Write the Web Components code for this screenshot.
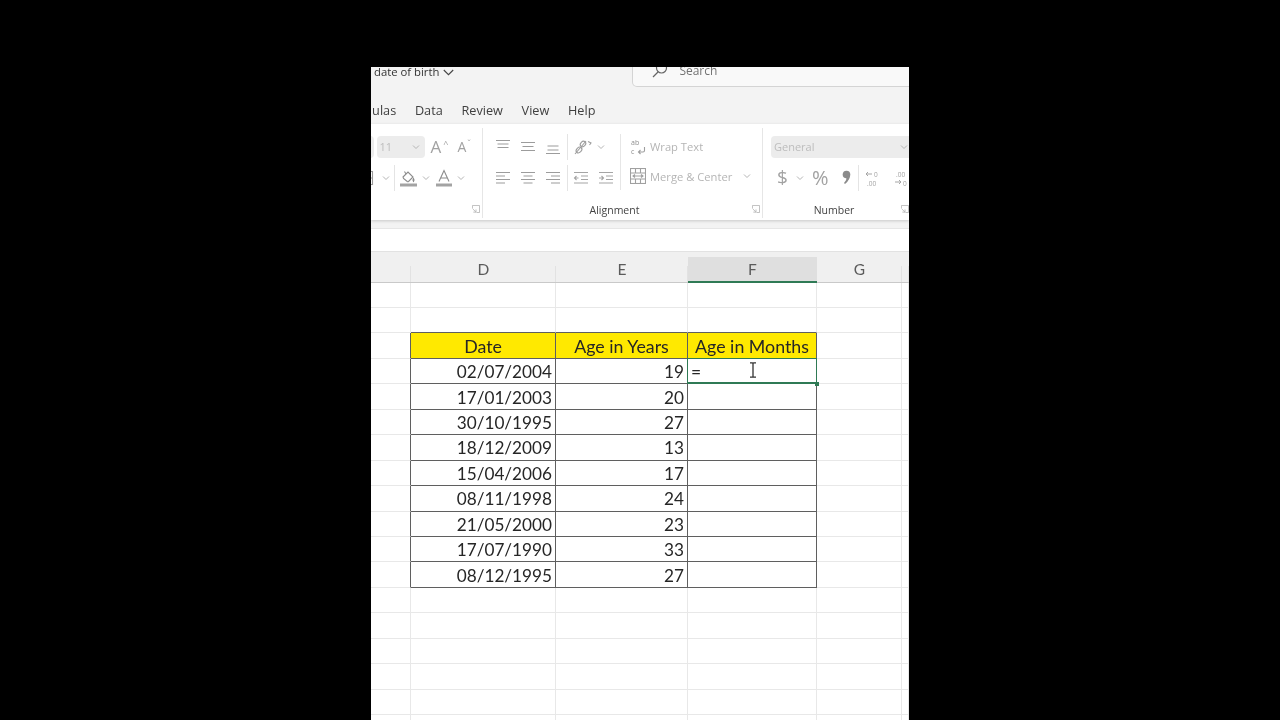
<!DOCTYPE html>
<html>
<head>
<meta charset="utf-8">
<title>Excel age sheet</title>
<style>
  html, body { margin: 0; height: 100%; background: #000; overflow: hidden; }
  body { display: flex; justify-content: center; }
  excel-window { margin-top: 67px; }
</style>
</head>
<body>

<excel-window>
  <title-row slot="top" name="date of birth"></title-row>
  <tab-row slot="top"></tab-row>
  <excel-ribbon slot="top"></excel-ribbon>
  <sheet-grid slot="sheet"></sheet-grid>
</excel-window>

<script>
const CHEV = `<svg width="8" height="6" viewBox="0 0 8 6" fill="none" stroke="#b5b5b5" stroke-width="1"><path d="M1 1.500l3 3 3-3"/></svg>`;

function lines(rows, stroke = '#9c9c9c') {
  const d = rows.map(r => `M${r[0]} ${r[1]}H${r[2]}`).join('');
  return `<svg width="16" height="16" viewBox="0 0 16 16" fill="none" stroke="${stroke}" stroke-width="1.1"><path d="${d}"/></svg>`;
}

const ICONS = {
  alignTop: lines([[1, 1.5, 15], [2.5, 5, 13.5], [2.5, 8.5, 13.5]]),
  alignMid: lines([[1, 3.5, 15], [2.5, 7.5, 13.5], [1, 11.5, 15]]),
  alignBot: lines([[2.5, 7, 13.5], [2.5, 11, 13.5], [1, 14.5, 15]]),
  left: lines([[1, 2.5, 15], [1, 6, 10], [1, 9.5, 15], [1, 13, 10]]),
  center: lines([[1, 2.5, 15], [3.5, 6, 12.5], [1, 9.5, 15], [3.5, 13, 12.5]]),
  right: lines([[1, 2.5, 15], [6, 6, 15], [1, 9.5, 15], [6, 13, 15]]),
  indentDec: `<svg width="16" height="16" viewBox="0 0 16 16" fill="none" stroke="#a5a5a5" stroke-width="1.1"><path d="M1 2.500h14M8 6h7M8 9.500h7M1 13h14M5.500 8H1.500M3.500 6l-2 2 2 2"/></svg>`,
  indentInc: `<svg width="16" height="16" viewBox="0 0 16 16" fill="none" stroke="#a5a5a5" stroke-width="1.1"><path d="M1 2.500h14M8 6h7M8 9.500h7M1 13h14M1 8h4M3.500 6l2 2-2 2"/></svg>`,
  orient: `<svg width="20" height="18" viewBox="0 0 20 18" fill="none" stroke="#9e9e9e" stroke-width="1.1"><ellipse cx="6" cy="12" rx="2.400" ry="3.200" transform="rotate(45 6 12)"/><ellipse cx="10" cy="6" rx="2.400" ry="3" transform="rotate(45 10 6)"/><path d="M2 16L13 3M15 3.500l3 1.500-1.500 2"/></svg>`,
  wrap: `<svg width="16" height="18" viewBox="0 0 16 18" fill="none" stroke="#9e9e9e" stroke-width="1.1"><text x="1" y="7.500" font-family="Open Sans" font-size="7" fill="#8f8f8f" stroke="none">ab</text><text x="1" y="17" font-family="Open Sans" font-size="7" fill="#8f8f8f" stroke="none">c</text><path d="M14.500 10v3.500a1.500 1.500 0 0 1-1.500 1.500H8.500M10.500 13l-2 2 2 2"/></svg>`,
  merge: `<svg width="16" height="16" viewBox="0 0 16 16" fill="none" stroke="#a0a0a0" stroke-width="1.1"><rect x=".5" y=".5" width="15" height="15"/><path d="M.5 5h15M.5 11h15M5.500 .5V5M10.500 .5V5M5.500 11v4.500M10.500 11v4.500M3 8h10M5 6.500L3 8l2 1.500M11 6.500L13 8l-2 1.500"/></svg>`,
  fill: `<svg width="17" height="18" viewBox="0 0 17 18" fill="none" stroke="#8c8c8c" stroke-width="1.1"><path d="M3 8l5-5 5 5-4.500 4.500a1 1 0 0 1-1.200 0L3.500 9.500zM6 5L4.500 2.500"/><path d="M13.500 9.500q1.200 1.800 0 3q-1.200-1.200 0-3z" fill="#8c8c8c"/><rect x="0" y="14.500" width="17" height="3" fill="#a3a3a3" stroke="none"/></svg>`,
  fontColor: `<svg width="16" height="18" viewBox="0 0 16 18" fill="none"><path d="M3 12.500L8 1.500l5 11M4.800 9h6.400" stroke="#8c8c8c" stroke-width="1.100"/><rect x="0" y="14.500" width="16" height="3" fill="#a3a3a3"/></svg>`,
  border: `<svg width="16" height="16" viewBox="0 0 16 16" fill="none" stroke="#9a9a9a" stroke-width="1.1"><rect x=".5" y="1.500" width="14" height="13"/><path d="M.5 8h14M7.500 1.500v13"/></svg>`,
  comma: `<svg width="9" height="15" viewBox="0 0 9 15"><circle cx="4.500" cy="4.500" r="3.800" fill="#8b8b8b"/><path d="M8 4.500q.5 5-5 9.500l-1-1q3-3 2.500-6z" fill="#8b8b8b"/></svg>`,
  launcher: `<svg width="8" height="8" viewBox="0 0 9 9" fill="none" stroke="#b8b8b8" stroke-width="1"><path d="M.5 4V.5H8.500V8.500H5M1 4.500l3.500 3.500M4.500 5v3H1.500"/></svg>`,
  search: `<svg width="16" height="16" viewBox="0 0 16 16" fill="none" stroke="#666" stroke-width="1.2"><circle cx="9.500" cy="6" r="5"/><path d="M6 10L1 15"/></svg>`,
  down: `<svg width="11" height="7" viewBox="0 0 11 7" fill="none" stroke="#444" stroke-width="1.1"><path d="M.8 1l4.700 4.700L10.200 1"/></svg>`
};

class ExcelIcon extends HTMLElement {
  connectedCallback() {
    this.attachShadow({mode: 'open'});
    this.shadowRoot.innerHTML = `<style>:host{display:inline-flex;align-items:center;justify-content:center;flex:none}svg{display:block}</style>${ICONS[this.getAttribute('name')]}`;
  }
}
customElements.define('excel-icon', ExcelIcon);

class ExcelWindow extends HTMLElement {
  constructor() {
    super();
    this.attachShadow({mode: 'open'});
    this.shadowRoot.innerHTML = `
      <style>
        :host { display: flex; flex-direction: column; width: 538px; height: 653px; overflow: hidden; background: #fff; font-family: "Open Sans", "Noto Sans", sans-serif; filter: blur(.35px); }
        ::slotted(*) { flex: none; }
      </style>
      <slot name="top"></slot>
      <slot name="sheet"></slot>`;
  }
}
customElements.define('excel-window', ExcelWindow);

class TitleRow extends HTMLElement {
  connectedCallback() {
    this.attachShadow({mode: 'open'});
    this.shadowRoot.innerHTML = `
      <style>
        :host { display: flex; height: 28px; background: #f3f3f3; color: #333; font-size: 11.300px; box-sizing: border-box; padding-left: 3px; }
        .name { display: flex; align-items: center; gap: 4px; height: 10px; line-height: 10px; }
        .search { margin-left: 178px; flex: 1; height: 20px; margin-top: -1px; margin-right: -4px; background: #f9f9f9; border: 1px solid #d4d4d4; border-top: 0; border-radius: 0 0 5px 5px; display: flex; align-items: flex-start; gap: 11px; padding: 0 0 0 19px; color: #737373; font-size: 12px; line-height: 9px; }
        .search excel-icon { margin-top: -4px; }
      </style>
      <div class="name"><span>${this.getAttribute('name')}</span><excel-icon name="down"></excel-icon></div>
      <div class="search"><excel-icon name="search"></excel-icon><span>Search</span></div>`;
  }
}
customElements.define('title-row', TitleRow);

class TabRow extends HTMLElement {
  connectedCallback() {
    this.attachShadow({mode: 'open'});
    const tabs = ['Formulas', 'Data', 'Review', 'View', 'Help'];
    this.shadowRoot.innerHTML = `
      <style>
        :host { display: flex; align-items: center; gap: 18.700px; height: 29px; background: #f3f3f3; color: #3f3f3f; font-size: 12.700px; box-sizing: border-box; margin-left: -30px; padding-top: 1px; }
      </style>
      ${tabs.map(t => `<span>${t}</span>`).join('')}`;
  }
}
customElements.define('tab-row', TabRow);

class RibbonGroup extends HTMLElement {
  connectedCallback() {
    this.attachShadow({mode: 'open'});
    const label = this.getAttribute('label') || '';
    this.shadowRoot.innerHTML = `
      <style>
        :host { display: grid; grid-template-rows: 62px 1fr; flex: none; box-sizing: border-box; width: var(--w); border-right: 1px solid #e6e6e6; position: relative; margin: 4px 0 2px; padding-top: 3px; }
        .body { display: flex; flex-direction: column; gap: 0; overflow: hidden; }
        .foot { display: flex; align-items: center; justify-content: center; position: relative; font-size: 10.500px; color: #444; height: 24px; margin-top: 5px; padding-right: var(--foot-pad, 0); }
        .launch { position: absolute; right: 2px; top: 7px; }
      </style>
      <div class="body"><slot></slot></div>
      <div class="foot"><span>${label}</span><excel-icon class="launch" name="launcher"></excel-icon></div>`;
  }
}
customElements.define('ribbon-group', RibbonGroup);

class RibbonLine extends HTMLElement {
  constructor() {
    super();
    this.attachShadow({mode: 'open'});
    this.shadowRoot.innerHTML = `
      <style>
        :host { display: flex; align-items: center; height: 31px; flex: none; white-space: nowrap; justify-content: var(--just, flex-start); }
      </style>
      <slot></slot>`;
  }
}
customElements.define('ribbon-line', RibbonLine);

class RibbonCombo extends HTMLElement {
  connectedCallback() {
    this.attachShadow({mode: 'open'});
    this.shadowRoot.innerHTML = `
      <style>
        :host { display: flex; align-items: center; justify-content: space-between; flex: none; box-sizing: border-box; height: 22px; background: #ececec; border-radius: 4px; padding: 0 5px 0 3px; color: #bdbdbd; font-size: 11px; width: var(--cw); }
      </style>
      <span>${this.getAttribute('value')}</span>${CHEV}`;
  }
}
customElements.define('ribbon-combo', RibbonCombo);

class ExcelRibbon extends HTMLElement {
  connectedCallback() {
    this.attachShadow({mode: 'open'});
    const chev = m => `<span class="ch" style="margin:0 ${m[1]}px 0 ${m[0]}px">${CHEV}</span>`;
    const sep = (l, r) => `<i class="sep" style="margin:0 ${r}px 0 ${l}px"></i>`;
    this.shadowRoot.innerHTML = `
      <style>
        :host { display: flex; height: 96px; background: #fff; box-sizing: border-box; box-shadow: 0 1px 3px rgba(0,0,0,.18); position: relative; overflow: visible; }
        .wrap { display: flex; width: 100%; overflow: hidden; height: 100%; }
        .ch { display: inline-flex; }
        .sep { display: block; width: 1px; height: 26px; background: #e4e4e4; flex: none; }
        .dim { color: #b5b5b5; font-size: 11.200px; }
        .big { color: #a2a2a2; line-height: 1; }
        ribbon-group { color: #a5a5a5; }
      </style>
      <div class="wrap">
        <ribbon-group style="--w:112px" label="">
          <ribbon-line style="--just:flex-end;padding-right:11px">
            <ribbon-combo value="" style="--cw:3px;margin-right:3px"></ribbon-combo>
            <ribbon-combo value="11" style="--cw:48px;margin-right:6px"></ribbon-combo>
            <span class="big" style="font-size:17px;margin-right:2px">A</span><span class="big" style="font-size:9px;margin:-6px 9px 0 0">^</span>
            <span class="big" style="font-size:14px;margin-right:1px">A</span><span class="big" style="font-size:9px;margin:-6px 0 0 0">ˇ</span>
          </ribbon-line>
          <ribbon-line style="--just:flex-end;padding-right:11px">
            <excel-icon name="border" style="margin-right:8px"></excel-icon>${chev([0, 4])}${sep(0, 5)}
            <excel-icon name="fill"></excel-icon>${chev([5, 6])}
            <excel-icon name="fontColor"></excel-icon>${chev([5, 6])}
          </ribbon-line>
        </ribbon-group>
        <ribbon-group style="--w:280px;--foot-pad:16px" label="Alignment">
          <div style="display:flex;height:62px">
            <div style="width:137px;padding-left:12px;box-sizing:border-box;flex:none">
              <ribbon-line>
                <excel-icon name="alignTop" style="margin-right:9px"></excel-icon>
                <excel-icon name="alignMid" style="margin-right:9px"></excel-icon>
                <excel-icon name="alignBot"></excel-icon>${sep(6, 5)}
                <excel-icon name="orient"></excel-icon>${chev([4, 0])}
              </ribbon-line>
              <ribbon-line>
                <excel-icon name="left" style="margin-right:9px"></excel-icon>
                <excel-icon name="center" style="margin-right:9px"></excel-icon>
                <excel-icon name="right"></excel-icon>${sep(6, 5)}
                <excel-icon name="indentDec" style="margin-right:9px"></excel-icon>
                <excel-icon name="indentInc"></excel-icon>
              </ribbon-line>
            </div>
            <div style="width:143px;border-left:1px solid #e6e6e6;height:56px;margin-top:3px;padding-left:9px;box-sizing:border-box">
              <ribbon-line style="height:24px"><excel-icon name="wrap" style="margin-right:4px"></excel-icon><span class="dim">Wrap Text</span></ribbon-line>
              <ribbon-line style="height:36px"><excel-icon name="merge" style="margin-right:4px"></excel-icon><span class="dim">Merge &amp; Center</span>${chev([11, 0])}</ribbon-line>
            </div>
          </div>
        </ribbon-group>
        <ribbon-group style="--w:149px;--foot-pad:6px" label="Number">
          <ribbon-line style="padding-left:14px"><ribbon-combo value="General" style="--cw:142px;margin-left:-6px"></ribbon-combo></ribbon-line>
          <ribbon-line style="padding-left:14px">
            <span class="big" style="font-size:19px;width:11px">$</span>${chev([8, 8])}
            <span class="big" style="font-size:20px;margin-right:14px">%</span>
            <excel-icon name="comma"></excel-icon>${sep(7, 6)}
            <svg style="flex:none" width="17" height="16" viewBox="0 0 17 16" fill="none" stroke="#a5a5a5"><path d="M7 4H1M3 2L1 4l2 2"/><text x="9" y="6.500" font-size="6.500" font-family="Open Sans" fill="#a5a5a5" stroke="none">0</text><text x="2" y="15.500" font-size="6.500" font-family="Open Sans" fill="#a5a5a5" stroke="none">.00</text></svg>
            <svg style="margin-left:12px;flex:none" width="17" height="16" viewBox="0 0 17 16" fill="none" stroke="#a5a5a5"><text x="2" y="6.500" font-size="6.500" font-family="Open Sans" fill="#a5a5a5" stroke="none">.00</text><path d="M1 12h6M5 10l2 2-2 2"/><text x="9" y="15.500" font-size="6.500" font-family="Open Sans" fill="#a5a5a5" stroke="none">0</text></svg>
          </ribbon-line>
        </ribbon-group>
      </div>`;
  }
}
customElements.define('excel-ribbon', ExcelRibbon);

class SheetCell extends HTMLElement {
  constructor() {
    super();
    this.attachShadow({mode: 'open'});
    this.shadowRoot.innerHTML = `
      <style>
        :host { display: flex; align-items: center; box-sizing: border-box; min-width: 0; position: relative; padding: 1px 3px 0; border-right: 1px solid #e8e8e8; border-bottom: 1px solid #e8e8e8; white-space: nowrap; }
        :host([edge~=r]) { border-right-color: #5f5f5f; }
        :host([edge~=b]) { border-bottom-color: #5f5f5f; }
        :host([kind=head]) { background: #ffe900; justify-content: center; font-size: 17.800px; }
        :host([kind=num]) { justify-content: flex-end; font-size: 17.200px; }
        :host([active]) { z-index: 1; }
        :host([active])::after { content: ""; position: absolute; left: -1px; top: -1px; right: -1px; bottom: -1px; border: 1px solid #2f7a55; border-bottom-width: 2px; }
        :host([active])::before { content: ""; position: absolute; right: -3px; bottom: -3px; width: 4px; height: 4px; background: #2f7a55; z-index: 2; }
      </style>
      <slot></slot>`;
  }
}
customElements.define('sheet-cell', SheetCell);

class SheetRow extends HTMLElement {
  constructor() {
    super();
    this.attachShadow({mode: 'open'});
    this.shadowRoot.innerHTML = `
      <style>
        :host { display: grid; grid-template-columns: var(--cols); height: 25.450px; }
      </style>
      <slot></slot>`;
  }
}
customElements.define('sheet-row', SheetRow);

class ColumnHeader extends HTMLElement {
  connectedCallback() {
    this.attachShadow({mode: 'open'});
    const letters = ['', 'D', 'E', 'F', 'G', ''];
    this.shadowRoot.innerHTML = `
      <style>
        :host { display: grid; grid-template-columns: var(--cols); height: 32px; background: #f0f0f0; border-top: 1px solid #e2e2e2; border-bottom: 1px solid #c9c9c9; box-sizing: border-box; color: #5b5b5b; font-size: 15.500px; }
        div { display: flex; align-items: center; justify-content: center; margin-top: 5px; position: relative; }
        div:not(.on)::before { content: ""; position: absolute; right: 0; top: 9px; bottom: 0; width: 1px; background: #e2e2e2; }
        div.on { background: #dfdfdf; }
        div.on::after { content: ""; position: absolute; left: 0; right: 0; bottom: -1px; height: 2px; background: #2f7a55; }
      </style>
      ${letters.map(l => `<div class="${l === 'F' ? 'on' : ''}">${l}</div>`).join('')}`;
  }
}
customElements.define('column-header', ColumnHeader);

class SheetGrid extends HTMLElement {
  connectedCallback() {
    this.attachShadow({mode: 'open'});
    const data = [
      ['02/07/2004', 19], ['17/01/2003', 20], ['30/10/1995', 27],
      ['18/12/2009', 13], ['15/04/2006', 17], ['08/11/1998', 24],
      ['21/05/2000', 23], ['17/07/1990', 33], ['08/12/1995', 27]
    ];
    const blank = (edge = '', n = 3) => Array(n).fill(`<sheet-cell edge="${edge}"></sheet-cell>`).join('');
    let rows = '';
    // two empty rows, the last one closes on the top edge of the table
    rows += `<sheet-row>${blank()}${blank()}</sheet-row>`;
    rows += `<sheet-row><sheet-cell></sheet-cell>${blank('b')}<sheet-cell></sheet-cell><sheet-cell></sheet-cell></sheet-row>`;
    rows += `<sheet-row><sheet-cell edge="r"></sheet-cell>
      <sheet-cell kind="head" edge="r b">Date</sheet-cell>
      <sheet-cell kind="head" edge="r b">Age in Years</sheet-cell>
      <sheet-cell kind="head" edge="r b">Age in Months</sheet-cell>
      <sheet-cell></sheet-cell><sheet-cell></sheet-cell></sheet-row>`;
    data.forEach(([date, age], i) => {
      const f = i === 0
        ? `<sheet-cell edge="r b" active>=<svg style="position:absolute;left:61px;top:3px" width="8" height="16" viewBox="0 0 8 16" fill="none" stroke="#333" stroke-width="1.300"><path d="M1 .8h2.300L4 1.500l.7-.7H7M4 1.500v13M1 15.200h2.300l.7-.7.7.7H7"/></svg></sheet-cell>`
        : `<sheet-cell edge="r b"></sheet-cell>`;
      rows += `<sheet-row><sheet-cell edge="r"></sheet-cell>
        <sheet-cell kind="num" edge="r b">${date}</sheet-cell>
        <sheet-cell kind="num" edge="r b">${age}</sheet-cell>
        ${f}<sheet-cell></sheet-cell><sheet-cell></sheet-cell></sheet-row>`;
    });
    for (let i = 0; i < 6; i++) rows += `<sheet-row>${blank()}${blank()}</sheet-row>`;
    this.shadowRoot.innerHTML = `
      <style>
        :host { display: block; --cols: 40px 145px 132px 129px 85px 7px; font-family: "Lato", "Liberation Sans", sans-serif; font-size: 17.500px; color: #262626; }
        .gray { height: 8px; background: #f3f3f3; }
        .formula { height: 22.600px; background: #fff; border-top: 1px solid #e6e6e6; box-sizing: border-box; }
      </style>
      <div class="gray"></div>
      <div class="formula"></div>
      <column-header></column-header>
      ${rows}`;
  }
}
customElements.define('sheet-grid', SheetGrid);
</script>
</body>
</html>
